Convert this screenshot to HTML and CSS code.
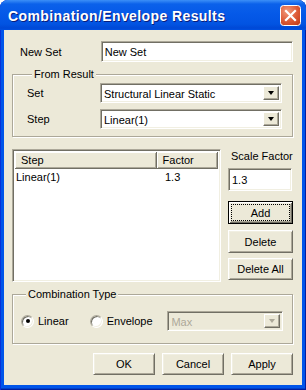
FILE: index.html
```html
<!DOCTYPE html>
<html lang="en">
<head>
    <meta charset="UTF-8">
    <title>Combination/Envelope Results</title>
    <link rel="stylesheet" href="styles.css">
</head>
<body>
    <div class="window">
        <div class="titlebar">
            <span class="title">Combination/Envelope Results</span>
            <span class="close-btn">
                <svg width="21" height="21" viewBox="0 0 21 21">
                    <defs>
                        <radialGradient id="closeFill" cx="0.35" cy="0.3" r="0.9">
                            <stop offset="0" stop-color="#f19a7c"/>
                            <stop offset="0.55" stop-color="#dd5a36"/>
                            <stop offset="1" stop-color="#c13a17"/>
                        </radialGradient>
                    </defs>
                    <rect x="0.5" y="0.5" width="20" height="20" rx="3" fill="url(#closeFill)" stroke="#fff"/>
                    <path d="M6 6 L15 15 M15 6 L6 15" stroke="#fff" stroke-width="2.2" stroke-linecap="square"/>
                </svg>
            </span>
        </div>

        <div class="client">
            <div class="new-set-row">
                <span class="new-set-label">New Set</span>
                <div class="field new-set-field">New Set</div>
            </div>

            <!-- From Result -->
            <div class="group from-result">
                <div class="group-title">From Result</div>
                <div class="form-row first">
                    <span class="row-label">Set</span>
                    <div class="combo">
                        <span class="combo-text">Structural Linear Static</span>
                        <span class="combo-btn"><i class="arrow"></i></span>
                    </div>
                </div>
                <div class="form-row">
                    <span class="row-label">Step</span>
                    <div class="combo">
                        <span class="combo-text">Linear(1)</span>
                        <span class="combo-btn"><i class="arrow"></i></span>
                    </div>
                </div>
            </div>

            <div class="steps">
                <div class="listview">
                    <div class="lv-head">
                        <div class="lv-col col-step">Step</div>
                        <div class="lv-col col-factor">Factor</div>
                    </div>
                    <div class="lv-row">
                        <span class="cell-step">Linear(1)</span>
                        <span class="cell-factor">1.3</span>
                    </div>
                </div>
                <div class="side">
                    <div class="side-label">Scale Factor</div>
                    <div class="field scale-field">1.3</div>
                    <button class="btn btn-default btn-add"><span class="focus">Add</span></button>
                    <button class="btn btn-delete">Delete</button>
                    <button class="btn btn-delete-all">Delete All</button>
                </div>
            </div>

            <!-- Combination Type -->
            <div class="group comb-type">
                <div class="group-title">Combination Type</div>
                <div class="radio-row">
                    <label class="radio-item item-linear"><span class="radio checked"></span>Linear</label>
                    <label class="radio-item item-envelope"><span class="radio"></span>Envelope</label>
                    <div class="combo disabled">
                        <span class="combo-text">Max</span>
                        <span class="combo-btn"><i class="arrow"></i></span>
                    </div>
                </div>
            </div>

            <div class="dialog-buttons">
                <button class="btn">OK</button>
                <button class="btn">Cancel</button>
                <button class="btn">Apply</button>
            </div>
        </div>
    </div>
</body>
</html>
```

FILE: styles.css
```css
* {
    box-sizing: border-box;
}

body {
    margin: 0;
    background: #fff;
    font-family: 'Liberation Sans', Arial, sans-serif;
    font-size: 11px;
    color: #000;
}

.window {
    width: 306px;
    height: 390px;
    background: #0055ea;
    border-radius: 8px 8px 0 0;
    overflow: hidden;
    display: flex;
    flex-direction: column;
    box-shadow: inset 1px 0 0 #0831d9, inset -1px 0 0 #001ea0, inset 0 -1px 0 #001ea0, inset 0 -2px 0 #0040c8;
}

.titlebar {
    height: 30px;
    flex: none;
    display: flex;
    justify-content: space-between;
    align-items: flex-start;
    padding: 5px 5px 0 8px;
    background: linear-gradient(to bottom, #3c8ff7 0, #0b61ea 4px, #0559e8 14px, #0254e2 24px, #0048d6 28px, #0050e0 30px);
}

.title {
    padding-top: 3px;
    line-height: 16px;
    font-size: 14px;
    font-weight: bold;
    letter-spacing: 0.4px;
    color: #fff;
    text-shadow: 1px 1px 0 #0a1d7a;
}

.close-btn {
    width: 21px;
    height: 21px;
    display: block;
}

.close-btn svg {
    display: block;
}

.client {
    flex: 1;
    margin: 0 4px 5px 4px;
    background: #ece9d8;
    padding: 11px 9px 0 8px;
}

/* sunken field */
.field,
.combo,
.listview {
    border: 1px solid;
    border-color: #aca899 #fff #fff #aca899;
    box-shadow: inset 1px 1px 0 #716f64, inset -1px -1px 0 #f1efe2;
    background: #fff;
}

.field {
    padding: 2px 3px;
    display: flex;
    align-items: center;
}

.new-set-row {
    display: flex;
    align-items: center;
    height: 21px;
}

.new-set-label {
    width: 89px;
    padding-left: 8px;
}

.new-set-field {
    width: 193px;
    height: 21px;
}

/* group boxes */
.group {
    border: 1px solid #aca899;
    box-shadow: inset 1px 1px 0 #fff, 1px 1px 0 #fff;
    margin-top: 12px;
}

.group-title {
    width: max-content;
    margin: -7px 0 0 5px;
    padding: 0 2px;
    line-height: 13px;
    background: #ece9d8;
}

.from-result {
    padding: 0 10px 7px 14px;
}

.form-row {
    display: flex;
    align-items: center;
    margin-top: 6px;
}

.form-row.first {
    margin-top: 2px;
}

.row-label {
    width: 73px;
}

.combo {
    width: 182px;
    height: 20px;
    display: flex;
    align-items: stretch;
    padding: 2px;
}

.combo-text {
    flex: 1;
    padding-left: 1px;
    line-height: 16px;
}

.combo-btn {
    width: 16px;
    background: #ece9d8;
    border: 1px solid;
    border-color: #fff #716f64 #716f64 #fff;
    box-shadow: inset -1px -1px 0 #aca899;
    display: flex;
    align-items: center;
    justify-content: center;
}

.arrow {
    width: 0;
    height: 0;
    border-left: 3.5px solid transparent;
    border-right: 3.5px solid transparent;
    border-top: 4px solid #000;
}

.combo.disabled {
    background: #ece9d8;
    color: #aca899;
    width: 116px;
}

.combo.disabled .arrow {
    border-top-color: #aca899;
}

/* list + side buttons */
.steps {
    display: flex;
    gap: 7px;
    margin-top: 12px;
}

.listview {
    width: 209px;
    height: 133px;
    padding: 2px;
}

.lv-head {
    display: flex;
    height: 17px;
}

.lv-col {
    background: #ece9d8;
    border-right: 1px solid #716f64;
    border-bottom: 1px solid #716f64;
    box-shadow: inset 1px 1px 0 #fff, inset -1px -1px 0 #aca899;
    padding-left: 6px;
    line-height: 16px;
}

.col-step {
    width: 143px;
}

.col-factor {
    width: 62px;
}

.lv-row {
    display: flex;
    height: 16px;
    line-height: 16px;
}

.cell-step {
    width: 143px;
    padding-left: 1px;
}

.cell-factor {
    padding-left: 7px;
}

.side {
    width: 65px;
    display: flex;
    flex-direction: column;
}

.side-label {
    line-height: 14px;
    padding-left: 3px;
}

.scale-field {
    margin-top: 5px;
    height: 23px;
    width: 64px;
}

.btn {
    font: inherit;
    color: #000;
    width: 62px;
    height: 22px;
    padding: 0;
    background: #ece9d8;
    border: 1px solid;
    border-color: #fff #716f64 #716f64 #fff;
    box-shadow: inset 1px 1px 0 #f1efe2, inset -1px -1px 0 #aca899;
    display: flex;
    align-items: center;
    justify-content: center;
}

.side .btn {
    width: 65px;
    height: 23px;
}

.btn-default {
    border-color: #000;
    box-shadow: inset 1px 1px 0 #fff, inset -1px -1px 0 #716f64, inset 2px 2px 0 #f1efe2, inset -2px -2px 0 #aca899;
    align-items: stretch;
}

.focus {
    flex: 1;
    margin: 2px;
    border: 1px dotted #000;
    display: flex;
    align-items: center;
    justify-content: center;
}

.btn-add {
    margin-top: 10px;
}

.btn-delete {
    margin-top: 6px;
}

.side .btn-delete-all {
    margin-top: 5px;
    height: 22px;
}

/* combination type */
.comb-type {
    padding: 0 9px 12px 8px;
}

.radio-row {
    display: flex;
    align-items: center;
    margin-top: 10px;
    height: 20px;
}

.radio-item {
    display: flex;
    align-items: center;
    gap: 4px;
}

.item-linear {
    width: 69px;
}

.item-envelope {
    width: 78px;
}

.radio {
    width: 13px;
    height: 13px;
    border-radius: 50%;
    border: 1px solid;
    border-color: #aca899 #fff #fff #aca899;
    box-shadow: inset 1px 1px 0 #716f64, inset -1px -1px 0 #f1efe2;
    background: #fff;
    display: flex;
    align-items: center;
    justify-content: center;
}

.radio.checked::after {
    content: '';
    width: 4px;
    height: 4px;
    border-radius: 50%;
    background: #000;
}

.dialog-buttons {
    display: flex;
    justify-content: flex-end;
    gap: 7px;
    margin-top: 9px;
}
```
